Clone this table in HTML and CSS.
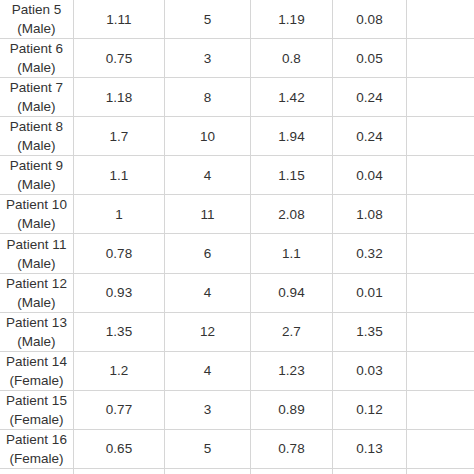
FILE: index.html
```html
<!DOCTYPE html>
<html>
<head>
<meta charset="utf-8">
<link rel="stylesheet" href="styles.css">
</head>
<body>
<div class="table">
  <div class="c">Patien 5<br>(Male)</div><div class="c">1.11</div><div class="c">5</div><div class="c">1.19</div><div class="c">0.08</div><div class="c"></div>
  <div class="c">Patient 6<br>(Male)</div><div class="c">0.75</div><div class="c">3</div><div class="c">0.8</div><div class="c">0.05</div><div class="c"></div>
  <div class="c">Patient 7<br>(Male)</div><div class="c">1.18</div><div class="c">8</div><div class="c">1.42</div><div class="c">0.24</div><div class="c"></div>
  <div class="c">Patient 8<br>(Male)</div><div class="c">1.7</div><div class="c">10</div><div class="c">1.94</div><div class="c">0.24</div><div class="c"></div>
  <div class="c">Patient 9<br>(Male)</div><div class="c">1.1</div><div class="c">4</div><div class="c">1.15</div><div class="c">0.04</div><div class="c"></div>
  <div class="c">Patient 10<br>(Male)</div><div class="c">1</div><div class="c">11</div><div class="c">2.08</div><div class="c">1.08</div><div class="c"></div>
  <div class="c">Patient 11<br>(Male)</div><div class="c">0.78</div><div class="c">6</div><div class="c">1.1</div><div class="c">0.32</div><div class="c"></div>
  <div class="c">Patient 12<br>(Male)</div><div class="c">0.93</div><div class="c">4</div><div class="c">0.94</div><div class="c">0.01</div><div class="c"></div>
  <div class="c">Patient 13<br>(Male)</div><div class="c">1.35</div><div class="c">12</div><div class="c">2.7</div><div class="c">1.35</div><div class="c"></div>
  <div class="c">Patient 14<br>(Female)</div><div class="c">1.2</div><div class="c">4</div><div class="c">1.23</div><div class="c">0.03</div><div class="c"></div>
  <div class="c">Patient 15<br>(Female)</div><div class="c">0.77</div><div class="c">3</div><div class="c">0.89</div><div class="c">0.12</div><div class="c"></div>
  <div class="c">Patient 16<br>(Female)</div><div class="c">0.65</div><div class="c">5</div><div class="c">0.78</div><div class="c">0.13</div><div class="c"></div>
  <div class="c"></div><div class="c"></div><div class="c"></div><div class="c"></div><div class="c"></div><div class="c"></div>
</div>
</body>
</html>
```
FILE: styles.css
```css
html, body {
  margin: 0;
  padding: 0;
  background: #ffffff;
  overflow: hidden;
}
.table {
  display: grid;
  grid-template-columns: 74px 91px 86px 82px 74px 1fr;
  grid-auto-rows: 39.08px;
  width: 474px;
  height: 474px;
  overflow: hidden;
  font-family: "Liberation Sans", Arial, sans-serif;
  font-size: 13.5px;
  line-height: 19px;
  color: #333333;
}
.c {
  box-sizing: border-box;
  border-right: 1px solid #d6d6d6;
  border-bottom: 1px solid #d6d6d6;
  display: flex;
  align-items: center;
  justify-content: center;
  text-align: center;
  white-space: nowrap;
}
.c:nth-child(6n) {
  border-right: none;
}
```
